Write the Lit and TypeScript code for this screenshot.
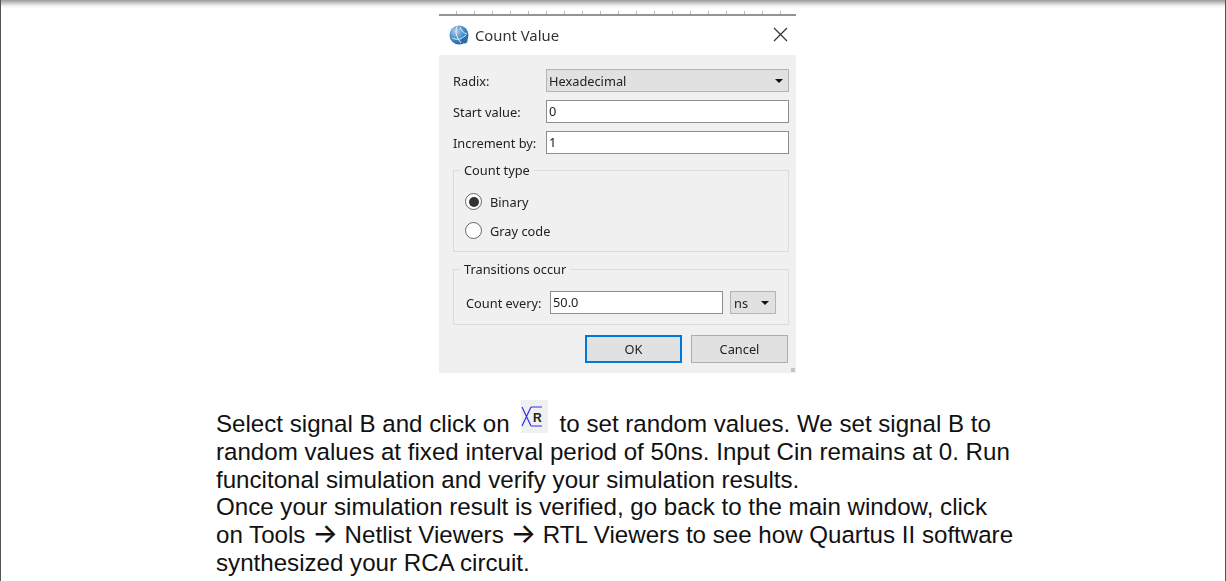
import { LitElement, html, css } from 'lit';
import { customElement } from 'lit/decorators.js';

@customElement('count-dialog')
export class CountDialog extends LitElement {
  static styles = css`
    :host {
      display: block;
      width: 357px;
      margin-left: 438px;
      font-family: 'Noto Sans', 'Open Sans', sans-serif;
      font-size: 12.8px;
      color: #222;
      filter: blur(0.3px);
    }
    .ruler {
      height: 3px;
      border-bottom: 2px solid #949494;
      background: repeating-linear-gradient(90deg, transparent 0 17px, #bbb 17px 18px);
    }
    .title {
      height: 37px;
      display: flex;
      align-items: center;
      gap: 6px;
      padding: 0 8px 2px 10px;
      background: #fff;
      font-size: 14.8px;
      color: #333;
    }
    .title svg.globe { width: 20px; height: 20px; }
    .title span { flex: 1; }
    .title svg.close { width: 15px; height: 15px; }
    .body {
      position: relative;
      background: #f0f0f0;
      padding: 14px 7px 10px 14px;
      height: 294px;
    }
    .row {
      display: grid;
      grid-template-columns: 93px 1fr;
      align-items: center;
      height: 23px;
      margin-bottom: 8px;
    }
    .input {
      height: 23px;
      box-sizing: border-box;
      border: 1px solid #8e8e8e;
      background: #fff;
      padding-left: 2px;
      line-height: 20px;
    }
    .select {
      height: 23px;
      box-sizing: border-box;
      border: 1px solid #b4b4b4;
      background: #e1e1e1;
      padding: 0 5px 0 2px;
      display: flex;
      align-items: center;
      justify-content: space-between;
    }
    .caret {
      width: 0;
      height: 0;
      border-left: 4px solid transparent;
      border-right: 4px solid transparent;
      border-top: 4px solid #111;
    }
    fieldset {
      margin: 0;
      border: 1px solid #dcdcdc;
      padding: 0;
      min-width: 0;
    }
    legend {
      margin-left: -5px;
      padding: 0 4px;
      line-height: 16px;
    }
    .count-type {
      height: 90px;
      box-sizing: border-box;
      padding: 9px 0 0 11px;
      margin-top: 8px;
    }
    .radio {
      display: flex;
      align-items: center;
      gap: 8px;
      height: 29px;
    }
    .radio i {
      width: 17px;
      height: 17px;
      box-sizing: border-box;
      border: 1.5px solid #666;
      border-radius: 50%;
      background: #fff;
      display: grid;
      place-items: center;
    }
    .radio i.on::after {
      content: '';
      width: 10px;
      height: 10px;
      border-radius: 50%;
      background: #333;
    }
    .transitions {
      height: 64px;
      box-sizing: border-box;
      margin-top: 9px;
      padding: 14px 11px 0 12px;
    }
    .transitions legend { margin-left: -6px; }
    .every {
      display: flex;
      align-items: center;
    }
    .every label { width: 84px; }
    .every .input { width: 173px; margin-right: 7px; }
    .every .select { width: 46px; padding: 0 6px 0 3px; }
    .actions {
      display: flex;
      justify-content: flex-end;
      gap: 9px;
      margin: 10px 1px 0 0;
    }
    .btn {
      width: 97px;
      height: 28px;
      box-sizing: border-box;
      border: 1px solid #adadad;
      background: #e1e1e1;
      display: grid;
      place-items: center;
    }
    .btn.default { border: 2px solid #0078d7; }
    .grip {
      position: absolute;
      right: 1px;
      bottom: 1px;
      width: 4px;
      height: 4px;
      background: radial-gradient(circle, #c4c4c4 0 1px, transparent 1px) 0 0 / 2px 2px;
    }
  `;

  render() {
    return html`
      <div class="ruler"></div>
      <div class="title">
        <svg class="globe" viewBox="0 0 20 20">
          <defs>
            <radialGradient id="g" cx="0.35" cy="0.3" r="0.8">
              <stop offset="0" stop-color="#b4d4ee" />
              <stop offset="0.55" stop-color="#3f8ac6" />
              <stop offset="1" stop-color="#155a98" />
            </radialGradient>
          </defs>
          <circle cx="10" cy="10" r="9.500" fill="url(#g)" />
          <path d="M3 13C7 15 12 15 17 10M8 1.500C6 6 7 12 12 18M11 2C12 5 14 8 18 9" fill="none" stroke="#e4f0f8" stroke-width="1" />
          <circle cx="15.500" cy="15.500" r="3" fill="#2a6da8" />
        </svg>
        <span>Count Value</span>
        <svg class="close" viewBox="0 0 15 15">
          <path d="M1 1L14 14M14 1L1 14" stroke="#333" stroke-width="1.200" fill="none" />
        </svg>
      </div>
      <div class="body">
        <div class="row">
          <label>Radix:</label>
          <div class="select">Hexadecimal<span class="caret"></span></div>
        </div>
        <div class="row">
          <label>Start value:</label>
          <div class="input">0</div>
        </div>
        <div class="row">
          <label>Increment by:</label>
          <div class="input">1</div>
        </div>
        <fieldset class="count-type">
          <legend>Count type</legend>
          <div class="radio"><i class="on"></i>Binary</div>
          <div class="radio"><i></i>Gray code</div>
        </fieldset>
        <fieldset class="transitions">
          <legend>Transitions occur</legend>
          <div class="every">
            <label>Count every:</label>
            <div class="input">50.0</div>
            <div class="select">ns<span class="caret"></span></div>
          </div>
        </fieldset>
        <div class="actions">
          <div class="btn default">OK</div>
          <div class="btn">Cancel</div>
        </div>
        <div class="grip"></div>
      </div>
    `;
  }
}

@customElement('app-root')
export class AppRoot extends LitElement {
  static styles = css`
    :host {
      display: block;
      height: 581px;
      overflow: hidden;
      background: #fff;
    }
    .page {
      height: 581px;
      box-sizing: border-box;
      padding-top: 11px;
      border-left: 1px solid #555;
      border-right: 1px solid #555;
      background: linear-gradient(#9a9a9a, #c8c8c8 3px, #f4f4f4 6px, #fff 9px) no-repeat top / 100% 9px;
    }
    p {
      margin: 37px 0 0 215px;
      font-family: 'Liberation Sans', Arial, sans-serif;
      font-size: 24.14px;
      line-height: 27.8px;
      color: #111;
    }
    .arrow {
      font-family: 'Inter', sans-serif;
      font-size: 27px;
      font-weight: 500;
      line-height: 0;
    }
    .key {
      display: inline-block;
      width: 27px;
      height: 33px;
      margin: -20px 4.500px 0 5px;
      vertical-align: -1px;
    }
  `;

  render() {
    return html`
      <div class="page">
        <count-dialog></count-dialog>
        <p>
          Select signal B and click on
          <svg class="key" viewBox="0 0 27 33">
            <rect width="27" height="33" fill="#f0f0f0" />
            <path d="M1 7L10 26M10 7L1 26M10 7H21M10 26H21" stroke="#3030f0" stroke-width="1.200" fill="none" />
            <text x="12" y="21.500" font-family="Liberation Sans, sans-serif" font-size="12" font-weight="700" fill="#222">R</text>
          </svg>
          to set random values. We set signal B to<br />
          random values at fixed interval period of 50ns. Input Cin remains at 0. Run<br />
          funcitonal simulation and verify your simulation results.<br />
          Once your simulation result is verified, go back to the main window, click<br />
          on Tools <span class="arrow">→</span> Netlist Viewers <span class="arrow">→</span> RTL Viewers to see how Quartus II software<br />
          synthesized your RCA circuit.
        </p>
      </div>
    `;
  }
}
